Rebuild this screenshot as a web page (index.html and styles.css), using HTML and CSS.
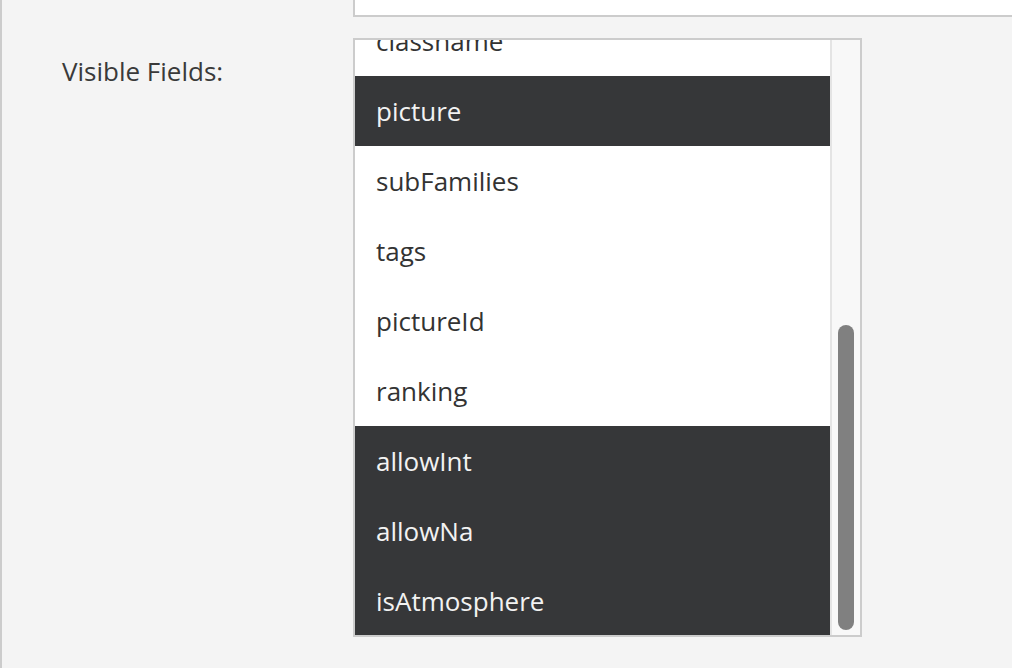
FILE: index.html
```html
<!DOCTYPE html>
<html>
<head>
<meta charset="utf-8">
<link rel="stylesheet" href="styles.css">
</head>
<body>
<div class="form">
  <div class="row row-top">
    <div class="label-col"></div>
    <div class="field-col">
      <div class="text-input"></div>
    </div>
  </div>
  <div class="row row-fields">
    <div class="label-col">
      <div class="label">Visible Fields:</div>
    </div>
    <div class="field-col">
      <div class="listbox">
        <div class="options">
          <div class="options-inner">
            <div class="option">classname</div>
            <div class="option selected">picture</div>
            <div class="option">subFamilies</div>
            <div class="option">tags</div>
            <div class="option">pictureId</div>
            <div class="option">ranking</div>
            <div class="option selected">allowInt</div>
            <div class="option selected">allowNa</div>
            <div class="option selected">isAtmosphere</div>
          </div>
        </div>
        <div class="scrollbar">
          <div class="thumb"></div>
        </div>
      </div>
    </div>
  </div>
</div>
</body>
</html>
```

FILE: styles.css
```css
html, body {
  margin: 0;
  padding: 0;
}
body {
  width: 1012px;
  height: 668px;
  box-sizing: border-box;
  overflow: hidden;
  background: #f4f4f4;
  border-left: 2px solid #cccccc;
  font-family: "Open Sans", "Noto Sans", sans-serif;
  color: #333333;
}
.form {
  display: flex;
  flex-direction: column;
  gap: 21px;
}
.row {
  display: grid;
  grid-template-columns: 351px 1fr;
}
.text-input {
  height: 15px;
  background: #ffffff;
  border: 2px solid #cccccc;
  border-top: 0;
  margin-right: -20px;
}
.label {
  padding-left: 60px;
  padding-top: 15px;
  font-size: 26px;
  color: #3a3a3a;
  line-height: normal;
}
.listbox {
  width: 509px;
  height: 599px;
  box-sizing: border-box;
  border: 2px solid #cccccc;
  display: flex;
  background: #ffffff;
}
.options {
  flex: 1;
  overflow: hidden;
}
.options-inner {
  margin-top: -34px;
}
.option {
  height: 70px;
  line-height: 70px;
  padding: 0 21px;
  font-size: 26px;
  color: #333333;
  white-space: nowrap;
}
.option.selected {
  background: #363739;
  color: #f2f2f2;
}
.scrollbar {
  width: 30px;
  border-left: 2px solid #e4e4e4;
  background: #f8f8f8;
  display: flex;
  flex-direction: column;
  align-items: center;
  justify-content: flex-end;
  padding-bottom: 5px;
  box-sizing: border-box;
}
.thumb {
  width: 16px;
  height: 305px;
  border-radius: 8px;
  background: #808080;
}
```
